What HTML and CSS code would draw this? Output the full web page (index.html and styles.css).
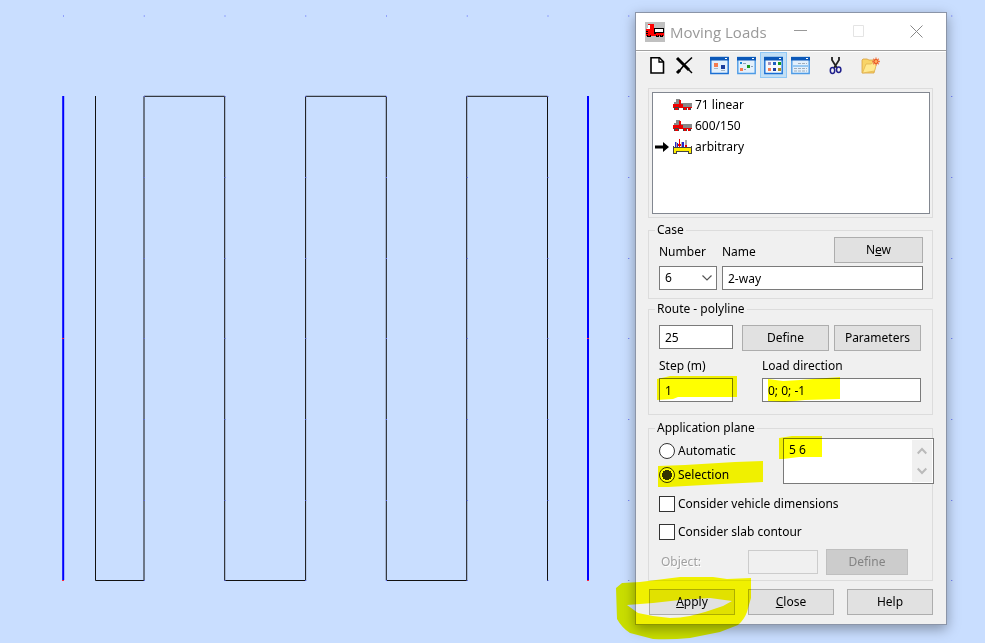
FILE: index.html
```html
<!DOCTYPE html>
<html lang="en">
<head>
    <meta charset="UTF-8">
    <meta name="viewport" content="width=device-width, initial-scale=1.0">
    <title>Moving Loads</title>
    <link rel="stylesheet" href="styles.css">
</head>
<body>
    <svg class="drawing" width="985" height="643" viewBox="0 0 985 643" aria-hidden="true">
        <path d="M95.5 96V580.5H144V96.3H224.7V580.5H305.6V96.3H386.3V580.5H466.7V96.3H547.5V581" fill="none" stroke="#111" stroke-width="1"/>
        <path d="M63 16H960M63 96.500H960M63 177.500H960M63 258.500H960M63 338.500H960M63 419.500H960M63 500.500H960M63 580.500H960" stroke="#5a64f8" stroke-dasharray="1 79.750"/>
        <path d="M63.2 96V580M588 96V580" stroke="#0000ff" stroke-width="2"/>
        <path d="M62 338.500h2M587 338.500h2M62 580.500h2M587 580.500h2" stroke="#ff2040"/>
    </svg>

    <div class="window">
        <header class="titlebar">
            <svg width="20" height="20" viewBox="0 0 20 20" shape-rendering="crispEdges">
                <path fill="#c0c0c0" d="M0 0h20v20H0z"/>
                <path fill="#f00" d="M3 2h6v9h10v3H1V7h2z"/>
                <path fill="#fff" d="M3 3h2v4H2V6h1z"/>
                <path fill="#000" d="M9 6h10v5H9zM1 9h2v1H1zM1 11h2v1H1zM2 13h4v2H2zM11 13h3v2h-3zM15 13h3v2h-3zM9 11h2v1H9z"/>
                <path fill="#fff" d="M10 7h8v3h-8z"/>
                <path fill="#f00" d="M3 13h2v1H3zM12 13h1v1h-1zM16 13h1v1h-1z"/>
            </svg>
            <h1>Moving Loads</h1>
            <button type="button" aria-label="Minimize">
                <svg width="13" height="13" viewBox="0 0 13 13"><path d="M0 5.500h13" stroke="#999"/></svg>
            </button>
            <button type="button" aria-label="Maximize" disabled>
                <svg width="13" height="13" viewBox="0 0 13 13"><path d="M1.500 .5h10v11h-10z" fill="none" stroke="#e4e4e4"/></svg>
            </button>
            <button type="button" aria-label="Close window">
                <svg width="13" height="13" viewBox="0 0 13 13"><path d="M.5 .5l12 12M12.500 .5l-12 12" stroke="#888"/></svg>
            </button>
        </header>

        <div class="toolbar">
            <button type="button" aria-label="New vehicle">
                <svg width="19" height="19" viewBox="0 0 19 19"><path d="M3 1.800h8.500l4 4V17H3z" fill="#fff" stroke="#000" stroke-width="1.600"/><path d="M11 1.500V6h4.500" fill="none" stroke="#000" stroke-width="1.300"/></svg>
            </button>
            <button type="button" aria-label="Delete vehicle">
                <svg width="19" height="19" viewBox="0 0 19 19"><path d="M2 2l12 12" stroke="#000" stroke-width="3"/><path d="M13 13l4 4" stroke="#000" stroke-width="1.500"/><path d="M17 1.500L10 8 3 16.500" fill="none" stroke="#000" stroke-width="1.600"/><path d="M2 17l3-3" stroke="#000" stroke-width="3"/></svg>
            </button>
            <button type="button" class="first" aria-label="Large icons">
                <svg width="19" height="19" viewBox="0 0 19 19"><path d="M.8 1.500h17.400v16H.8z" fill="#e3f0fc" stroke="#1a6fd4" stroke-width="1.400"/><path d="M0 1h19v3.500H0z" fill="#0c58b8"/><path d="M15 2h2v1h-2z" fill="#fff"/><path d="M4 7h4v4H4z" fill="#f47b50"/><path d="M11 9h4v4h-4z" fill="#1b3d9c"/><path d="M4 12.500h4M11 14.500h4" stroke="#a8b8c8"/></svg>
            </button>
            <button type="button" aria-label="Small icons">
                <svg width="19" height="19" viewBox="0 0 19 19"><path d="M.8 1.500h17.400v16H.8z" fill="#e3f0fc" stroke="#4e9be6" stroke-width="1.400"/><path d="M0 1h19v3.500H0z" fill="#0c58b8"/><path d="M15 2h2v1h-2z" fill="#fff"/><path d="M3 6h2v2H3z" fill="#1685d8"/><path d="M10 9h3v3h-3z" fill="#159a20"/><path d="M3 12h3v3H3z" fill="#f47b50"/><path d="M6 7.500h3M14 10.500h2M7 13.500h2" stroke="#8ca0b4"/></svg>
            </button>
            <button type="button" class="active" aria-label="List" aria-pressed="true">
                <svg width="19" height="19" viewBox="0 0 19 19"><path d="M.8 1.500h17.400v16H.8z" fill="#f4f8fc" stroke="#1a6fd4" stroke-width="1.400"/><path d="M0 1h19v3.500H0z" fill="#0c58b8"/><path d="M15 2h2v1h-2z" fill="#fff"/><path d="M4 6h3v3H4z" fill="#a090c0"/><path d="M9 6h3v3H9z" fill="#1c5fc0"/><path d="M14 6h3v3h-3z" fill="#159a20"/><path d="M4 12h3v3H4z" fill="#f47b50"/><path d="M9 12h3v3H9z" fill="#1b3d9c"/><path d="M14 12h3v3h-3z" fill="#b09020"/></svg>
            </button>
            <button type="button" aria-label="Details">
                <svg width="19" height="19" viewBox="0 0 19 19"><path d="M.8 1.500h17.400v16H.8z" fill="#e3f0fc" stroke="#4e9be6" stroke-width="1.400"/><path d="M0 1h19v3.500H0z" fill="#0c58b8"/><path d="M15 2h2v1h-2z" fill="#fff"/><path d="M2 10h15" stroke="#4aa0e8"/><path d="M7 7.500h9M3 12.500h13M3 15h13" stroke="#a0adba" stroke-dasharray="3 1"/></svg>
            </button>
            <button type="button" class="first" aria-label="Cut">
                <svg width="19" height="19" viewBox="0 0 19 19"><path d="M6 1v3l5 8M13 1v3l-5 8" fill="none" stroke="#222" stroke-width="1.800"/><ellipse cx="6.500" cy="14.500" rx="2.200" ry="3" fill="none" stroke="#20208c" stroke-width="1.500"/><ellipse cx="12.700" cy="13.700" rx="2.200" ry="2.700" fill="none" stroke="#20208c" stroke-width="1.500"/></svg>
            </button>
            <button type="button" class="first" aria-label="Open catalog">
                <svg width="19" height="19" viewBox="0 0 19 19"><path d="M1 4l1-1h4l2 1h7v4L13 17H1z" fill="#f8d468" stroke="#d8a03c" stroke-width=".8"/><path d="M1.500 17L5 8h5l2-1.500h4L13.500 15z" fill="#ffe990" stroke="#e0b04c" stroke-width=".7"/><path d="M15 1.500v8M11 5.500h8M12.200 2.700l5.600 5.600M17.800 2.700l-5.600 5.600" stroke="#f08050" stroke-width="1.300"/><circle cx="15" cy="5.500" r="2" fill="#ffb060" stroke="#e85020"/></svg>
            </button>
        </div>

        <form class="content">
            <div class="list-frame">
                <ul class="vehicles">
                    <li>
                        <span class="pointer"></span>
                        <svg width="19" height="14" viewBox="0 0 19 14" shape-rendering="crispEdges"><path fill="#888" d="M3 1h4v5H1V4h2zM8 5h11v4H8z"/><path fill="#e00" d="M6 2h2v4h2v4H0V6h6zM10 9h9v1h-9z"/><path fill="#444" d="M1 9h5v3H1zM10 10h4v2h-4zM15 10h3v2h-3z"/><path fill="#e00" d="M2 10h3v2H2zM11 10h2v2h-2zM15 10h2v2h-2z"/></svg>
                        71 linear
                    </li>
                    <li>
                        <span class="pointer"></span>
                        <svg width="19" height="14" viewBox="0 0 19 14" shape-rendering="crispEdges"><path fill="#888" d="M3 1h4v5H1V4h2zM8 5h11v4H8z"/><path fill="#e00" d="M6 2h2v4h2v4H0V6h6zM10 9h9v1h-9z"/><path fill="#444" d="M1 9h5v3H1zM10 10h4v2h-4zM15 10h3v2h-3z"/><path fill="#e00" d="M2 10h3v2H2zM11 10h2v2h-2zM15 10h2v2h-2z"/></svg>
                        600/150
                    </li>
                    <li>
                        <span class="pointer"><svg width="14" height="12" viewBox="0 0 14 12"><path d="M0 4.500h8V1l6 5-6 5V7.500H0z"/></svg></span>
                        <svg width="19" height="16" viewBox="0 0 20 16" shape-rendering="crispEdges"><path fill="#22c" d="M2 3h1v5H2zM4 4h1v4H4zM9 3h1v5H9zM11 3h1v5h-1z"/><path fill="#aaa" d="M3 3h1v5H3zM8 3h1v5H8zM13 1h2v6h-2z"/><path fill="#e00" d="M6 0h1v8H6zM5 5h3v2H5zM13 6h2v2h-2z"/><path fill="#444" d="M0 7h1v8H0zM1 8h18v1H1zM19 7h1v8h-1zM4 12h12v1H4z"/><path fill="#fe0" d="M1 9h18v3H1zM1 12h2v2H1zM17 12h2v2h-2z"/><path fill="#444" d="M1 14h3v1H1zM16 14h3v1h-3zM3 12h1v2H3zM16 12h1v2h-1z"/></svg>
                        arbitrary
                    </li>
                </ul>
            </div>

            <fieldset class="case">
                <legend>Case</legend>
                <label for="caseNumber">Number</label>
                <label for="caseName">Name</label>
                <button type="button" class="btn">N<u>e</u>w</button>
                <div class="dropdown">
                    <select id="caseNumber"><option>6</option></select>
                    <svg width="10" height="6" viewBox="0 0 10 6"><path d="M.5 .5L5 5 9.500 .5" fill="none" stroke="#555" stroke-width="1.200"/></svg>
                </div>
                <input type="text" id="caseName" class="name" value="2-way">
            </fieldset>

            <fieldset class="route">
                <legend>Route - polyline</legend>
                <div class="row polyline">
                    <input type="text" aria-label="Polyline number" value="25">
                    <button type="button" class="btn">Define</button>
                    <button type="button" class="btn">Parameters</button>
                </div>
                <div class="row step">
                    <div>
                        <label for="step">Step (m)</label>
                        <input type="text" id="step" value="1">
                    </div>
                    <div>
                        <label for="direction">Load direction</label>
                        <input type="text" id="direction" value="0; 0; -1">
                    </div>
                </div>
            </fieldset>

            <fieldset class="plane">
                <legend>Application plane</legend>
                <div class="row selection">
                    <div class="radios">
                        <label><input type="radio" name="plane">Automatic</label>
                        <label><input type="radio" name="plane" checked>Selection</label>
                    </div>
                    <div class="objects">
                        <textarea aria-label="Selected objects">5 6</textarea>
                        <div class="scrollbar">
                            <svg width="10" height="8" viewBox="0 0 10 8"><path d="M.7 6.500L5 2l4.300 4.500" fill="none" stroke="#bababa" stroke-width="2"/></svg>
                            <svg width="10" height="8" viewBox="0 0 10 8"><path d="M.7 1.500L5 6l4.300-4.500" fill="none" stroke="#bababa" stroke-width="2"/></svg>
                        </div>
                    </div>
                </div>
                <label class="check"><input type="checkbox">Consider vehicle dimensions</label>
                <label class="check"><input type="checkbox">Consider slab contour</label>
                <div class="row object">
                    <label for="object">Object:</label>
                    <input type="text" id="object" disabled>
                    <button type="button" class="btn" disabled>Define</button>
                </div>
            </fieldset>

            <footer class="actions">
                <button type="button" class="btn"><u>A</u>pply</button>
                <button type="button" class="btn"><u>C</u>lose</button>
                <button type="button" class="btn">Help</button>
            </footer>
        </form>
    </div>

    <!-- marker strokes -->
    <svg class="marker" width="985" height="643" viewBox="0 0 985 643" fill="#ff0" aria-hidden="true">
        <path d="M657 379l9-2 4-1h67v21h-59l-5 2-16 1z"/>
        <path d="M768 379l15 2 17-1 40-3v22l-35 1-20 2-17-1z"/>
        <path d="M779 438l13-2h30v21h-23l-16 2h-4z"/>
        <path d="M658 466l27-1 50-3 28-1v21l-41 2-54 3h-10z"/>
        <path fill-rule="evenodd" d="M616 588l6-5 18-1 40-5h33l14 2 24-1v20l-4 14q-3 8-9 13l-18 7-30 6q-20 2-37 1l-23-6q-8-5-13-14zM627 605l26-2 27-3 30-2 22 3-9 5-18 6-15 4q-10 2-20 2l-17-2-15-3z"/>
    </svg>
</body>
</html>
```
FILE: styles.css
```css
* {
    box-sizing: border-box;
}
body {
    position: relative;
    margin: 0;
    min-height: 100vh;
    overflow: hidden;
    background-color: #c9deff;
    font-family: "Noto Sans", Tahoma, sans-serif;
    font-size: 12px;
    line-height: 14px;
    color: #000;
}
.drawing {
    display: block;
}
.marker {
    position: absolute;
    top: 0;
    left: 0;
    mix-blend-mode: multiply;
    pointer-events: none;
}
.window {
    position: absolute;
    top: 12px;
    left: 635px;
    width: 312px;
    background-color: #f0f0f0;
    border: 1px solid #8b95a8;
    box-shadow: 0 4px 12px rgba(0, 0, 0, 0.35);
}
button,
input,
select,
textarea {
    font: inherit;
    color: inherit;
    margin: 0;
}

/* title bar */
.titlebar {
    display: flex;
    align-items: center;
    height: 38px;
    padding: 0 1px 0 9px;
    background-color: #fff;
    border-bottom: 1px solid #a0a0a0;
}
.titlebar h1 {
    flex: 1;
    margin: 0 0 0 5px;
    font-family: "Open Sans", sans-serif;
    font-size: 15px;
    font-weight: normal;
    line-height: 20px;
    color: #999;
    white-space: nowrap;
}
.titlebar button {
    display: flex;
    align-items: center;
    justify-content: center;
    width: 58px;
    height: 37px;
    padding: 0;
    border: none;
    background: none;
}

/* toolbar */
.toolbar {
    display: flex;
    height: 37px;
    padding: 0 8px;
    border-top: 1px solid #fff;
}
.toolbar button {
    display: flex;
    align-items: center;
    justify-content: center;
    width: 27px;
    height: 26px;
    padding: 0;
    border: 1px solid transparent;
    background: none;
}
.toolbar .first {
    margin-left: 8px;
}
.toolbar .active {
    background-color: #c2dff5;
    border-color: #90c8f6;
}

/* form */
.content {
    padding: 0 13px 9px 12px;
}
.list-frame {
    padding: 3px 2px 3px 3px;
    border: 1px solid #dcdcdc;
}
.vehicles {
    height: 122px;
    margin: 0;
    padding: 1px 2px;
    list-style: none;
    background-color: #fff;
    border: 1px solid #828790;
}
.vehicles li {
    display: flex;
    align-items: center;
    gap: 3px;
    height: 21px;
}
.pointer {
    display: flex;
    width: 15px;
}
fieldset {
    min-width: 0;
    margin: 0;
    padding: 0 9px 8px 10px;
    border: 1px solid #dcdcdc;
}
legend {
    margin-left: -4px;
    padding: 0 2px;
}
.row {
    display: flex;
}
input[type="text"],
select,
textarea {
    width: 100%;
    height: 24px;
    padding: 0 5px;
    background-color: #fff;
    border: 1px solid #7a7a7a;
    border-radius: 0;
}
.btn {
    height: 26px;
    padding: 0;
    background-color: #e1e1e1;
    border: 1px solid #adadad;
}
.btn:hover {
    background-color: #e5f1fb;
    border-color: #0078d7;
}
.btn:disabled {
    background-color: #ccc;
    border-color: #bfbfbf;
    color: #838383;
}

.case {
    display: grid;
    grid-template-columns: 58px 1fr 89px;
    gap: 3px 5px;
    align-items: center;
    margin-top: 5px;
}
.case label {
    padding-top: 4px;
}
.case .name {
    grid-column: span 2;
}
.dropdown {
    display: grid;
    align-items: center;
}
.dropdown select,
.dropdown svg {
    grid-area: 1 / 1;
}
.dropdown select {
    appearance: none;
}
.dropdown svg {
    justify-self: end;
    margin-right: 5px;
    pointer-events: none;
}

.route {
    margin-top: 3px;
    padding: 0 11px 12px 10px;
}
.polyline {
    gap: 5px;
    padding-top: 9px;
}
.polyline input[type="text"] {
    width: 74px;
    margin-right: 4px;
}
.polyline .btn {
    flex: 1;
}
.step {
    gap: 29px;
    margin-top: 8px;
}
.step div:first-child {
    width: 74px;
}
.step div:last-child {
    flex: 1;
}
.step label {
    display: block;
    margin-bottom: 5px;
}

.plane {
    margin-top: 6px;
    padding: 0 0 5px 10px;
}
.selection {
    justify-content: space-between;
    padding-top: 3px;
}
.radios {
    padding-top: 1px;
}
.radios label,
.check {
    display: flex;
    align-items: center;
    gap: 3px;
}
.radios label {
    height: 24px;
}
.check {
    height: 28px;
}
.selection + .check {
    margin-top: 3px;
}
input[type="radio"],
input[type="checkbox"] {
    appearance: none;
    width: 16px;
    height: 16px;
    background-color: #fff;
    border: 1px solid #333;
}
input[type="radio"] {
    border-radius: 50%;
}
input[type="radio"]:checked {
    background-image: radial-gradient(circle, #333 5px, #fff 5px);
}
input[type="checkbox"]:checked {
    background-image: linear-gradient(#333, #333);
    background-clip: content-box;
    padding: 3px;
}
.objects {
    display: flex;
    width: 151px;
    height: 46px;
    margin-right: -2px;
    padding: 1px;
    background-color: #fff;
    border: 1px solid #7a7a7a;
}
.objects textarea {
    flex: 1;
    min-width: 0;
    height: 100%;
    padding: 3px 4px;
    border: none;
    resize: none;
    overflow: hidden;
}
.scrollbar {
    display: flex;
    flex-direction: column;
    justify-content: space-between;
    align-items: center;
    width: 20px;
    padding: 7px 0;
    background-color: #f0f0f0;
}
.object {
    align-items: center;
    gap: 8px;
    margin-top: 3px;
    padding: 0 24px 0 2px;
}
.object label {
    flex: 1;
    color: #a0a0a0;
    text-shadow: 1px 1px #fff;
}
.object input[type="text"] {
    width: 70px;
    background-color: #f0f0f0;
    border-color: #ccc;
}
.object .btn {
    width: 82px;
}

.actions {
    display: flex;
    justify-content: space-between;
    margin-top: 8px;
    padding-left: 1px;
}
.actions .btn {
    width: 86px;
}
```
